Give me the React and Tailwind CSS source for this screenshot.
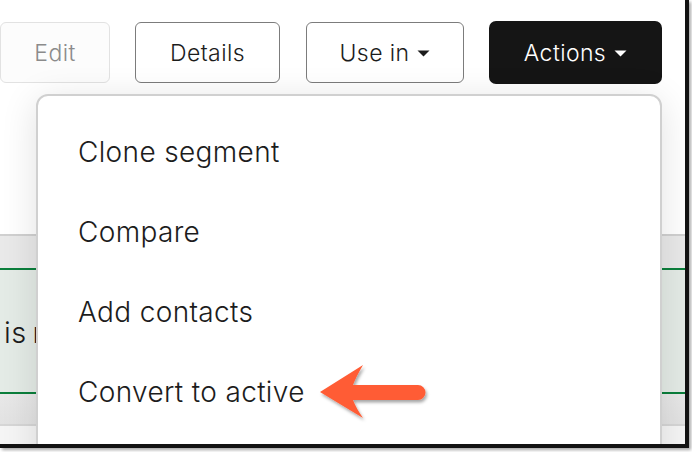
import React from "react";

const font = { fontFamily: "Inter, 'Liberation Sans', sans-serif" };

function Caret() {
  return (
    <svg width="13" height="7" viewBox="0 0 13 7" className="shrink-0">
      <path d="M0.5 0.5 L12.5 0.5 L6.5 6.5 Z" fill="currentColor" />
    </svg>
  );
}

function Arrow() {
  return (
    <svg
      width="120"
      height="66"
      viewBox="0 0 120 66"
      className="absolute left-[316px] top-[359px]"
    >
      <defs>
        <filter id="sh" x="-20%" y="-20%" width="140%" height="160%">
          <feDropShadow dx="1.5" dy="2.5" stdDeviation="1.6" floodColor="#000" floodOpacity="0.35" />
        </filter>
      </defs>
      <path
        d="M4 33 L47 6 Q40 18 37 26 L102 26 A7.5 7.5 0 0 1 102 41 L37 41 Q40 49 47 59 Z"
        fill="#ff5c35"
        filter="url(#sh)"
      />
    </svg>
  );
}

export default function App() {
  const items = ["Clone segment", "Compare", "Add contacts", "Convert to active"];
  return (
    <div className="w-[692px] h-[452px] bg-white" style={font}>
      <div className="relative w-[689px] h-[448px] overflow-hidden bg-white border-r-4 border-b-4 border-[#121212] shadow-[2px_2px_3px_rgba(0,0,0,0.35)]">
        {/* button row */}
        <div className="flex pt-[22px] text-[23px] font-light tracking-[0.4px] text-[#1c1c1c]">
          <div className="w-[110px] h-[61px] pt-[2px] flex items-center justify-center rounded-[6px] border border-[#e2e2e2] bg-[#fcfcfc] text-[#8b8b8b]">
            Edit
          </div>
          <div className="ml-[25px] w-[145px] h-[61px] pt-[2px] flex items-center justify-center rounded-[6px] border-[1.5px] border-[#7c7c7c] bg-white">
            Details
          </div>
          <div className="ml-[26px] w-[158px] h-[61px] pt-[2px] flex items-center justify-center gap-[8px] rounded-[6px] border-[1.5px] border-[#7c7c7c] bg-white">
            <span>Use in</span>
            <Caret />
          </div>
          <div className="ml-[25px] w-[173px] h-[63px] -mt-px pt-[2px] flex items-center justify-center gap-[8px] rounded-[7px] bg-[#151515] text-white">
            <span>Actions</span>
            <Caret />
          </div>
        </div>

        {/* table underneath */}
        <div className="mt-[150px]">
          <div className="h-[34px] border-t-2 border-[#d0d0d0] bg-[#e9e9e9]" />
          <div className="h-[126px] pt-[4px] border-y-2 border-[#0b7f3c] bg-[#e4ebe6] flex items-center pl-[4px] text-[29px] font-light tracking-[0.5px] [word-spacing:-3px] text-[#1c1c1c]">
            is r
          </div>
          <div className="h-[32px] bg-gradient-to-b from-[#e8e8e8] to-[#e2e2e2] border-b-2 border-[#d6d6d6]" />
          <div className="h-[40px] bg-[#f5f5f5]" />
        </div>

        {/* dropdown menu */}
        <div className="absolute left-[36px] top-[94px] w-[626px] h-[400px] rounded-[12px] border-2 border-[#d0d0d0] bg-white shadow-[0_6px_36px_rgba(0,0,0,0.12)] pt-[16px]">
          {items.map((t) => (
            <div key={t} className="h-[80px] flex items-center pl-[40px] text-[28px] font-light tracking-[0.35px] text-[#1c1c1c]">
              {t}
            </div>
          ))}
        </div>

        <Arrow />
      </div>
    </div>
  );
}
